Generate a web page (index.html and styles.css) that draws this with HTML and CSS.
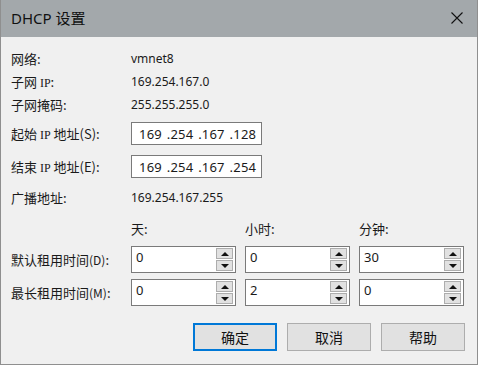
FILE: index.html
```html
<!DOCTYPE html>
<html lang="zh-CN">
<head>
  <meta charset="UTF-8">
  <title>DHCP 设置</title>
  <link rel="stylesheet" href="styles.css">
</head>
<body>
  <div class="dialog">
    <div class="titlebar">
      <span class="title">DHCP 设置</span>
      <span class="close">
        <svg width="12" height="12" viewBox="0 0 12 12"><path d="M0.5 0.5 L11.5 11.5 M11.5 0.5 L0.5 11.5" stroke="#111" stroke-width="1.1" fill="none"/></svg>
      </span>
    </div>
    <div class="content">
      <div class="row info">
        <span class="label">网络:</span>
        <span class="value">vmnet8</span>
      </div>
      <div class="row info">
        <span class="label">子网 <i>IP</i>:</span>
        <span class="value">169.254.167.0</span>
      </div>
      <div class="row info">
        <span class="label">子网掩码:</span>
        <span class="value">255.255.255.0</span>
      </div>
      <div class="row ip-row first">
        <span class="label">起始 <i>IP</i> 地址(S):</span>
        <div class="ip-box"><span>169</span>.<span>254</span>.<span>167</span>.<span>128</span></div>
      </div>
      <div class="row ip-row">
        <span class="label">结束 <i>IP</i> 地址(E):</span>
        <div class="ip-box"><span>169</span>.<span>254</span>.<span>167</span>.<span>254</span></div>
      </div>
      <div class="row info bcast">
        <span class="label">广播地址:</span>
        <span class="value">169.254.167.255</span>
      </div>

      <div class="lease">
        <span></span>
        <span class="head">天:</span>
        <span class="head">小时:</span>
        <span class="head">分钟:</span>

        <span class="label">默认租用时间<small>(D)</small>:</span>
        <div class="spin"><span class="num">0</span><span class="btns"><b class="up"></b><b class="down"></b></span></div>
        <div class="spin"><span class="num">0</span><span class="btns"><b class="up"></b><b class="down"></b></span></div>
        <div class="spin"><span class="num">30</span><span class="btns"><b class="up"></b><b class="down"></b></span></div>

        <span class="label">最长租用时间<small>(M)</small>:</span>
        <div class="spin"><span class="num">0</span><span class="btns"><b class="up"></b><b class="down"></b></span></div>
        <div class="spin"><span class="num">2</span><span class="btns"><b class="up"></b><b class="down"></b></span></div>
        <div class="spin"><span class="num">0</span><span class="btns"><b class="up"></b><b class="down"></b></span></div>
      </div>

      <div class="buttons">
        <button class="default">确定</button>
        <button>取消</button>
        <button>帮助</button>
      </div>
    </div>
  </div>
</body>
</html>
```

FILE: styles.css
```css
* {
  margin: 0;
  padding: 0;
  box-sizing: border-box;
}
body {
  width: 478px;
  height: 365px;
  font-family: "Noto Sans", "Noto Sans CJK SC", sans-serif;
  background: #f0f0f0;
  color: #1a1a1a;
}
.dialog {
  width: 478px;
  height: 365px;
  display: flex;
  flex-direction: column;
  border: 1px solid #8f8f8f;
  border-top: none;
  background: #f0f0f0;
}
.titlebar {
  height: 37px;
  background: #a3a8ab;
  display: flex;
  align-items: center;
  justify-content: space-between;
  padding: 0 14px 2px 10px;
}
.title {
  font-size: 15px;
  color: #111;
  font-family: "Noto Sans", "Noto Sans CJK SC", sans-serif;
}
.close {
  display: flex;
  margin-top: 1px;
}
.content {
  padding: 10px 12px 0 10px;
}
.row {
  display: flex;
  align-items: center;
}
.label {
  width: 120px;
  font-size: 13px;
  font-family: "Noto Sans CJK SC", sans-serif;
  color: #1a1a1a;
  white-space: nowrap;
}
.label i {
  font-style: normal;
  font-family: "Liberation Serif", serif;
  font-size: 12px;
}
.label small {
  font-size: 12px;
}
.value {
  font-size: 12px;
  font-family: "Noto Sans", sans-serif;
}
.info {
  height: 23px;
}
.ip-row {
  height: 23px;
  margin-bottom: 10px;
}
.ip-row.first {
  margin-top: 6px;
}
.bcast {
  margin-top: -2px;
}
.ip-box {
  width: 131px;
  height: 23px;
  background: #fff;
  border: 1px solid #7a7a7a;
  display: flex;
  align-items: center;
  padding-left: 7px;
  font-size: 13px;
  font-family: "Noto Sans", sans-serif;
  letter-spacing: 0.2px;
}
.ip-box span {
  width: 25px;
  text-align: left;
  margin-right: 3px;
}
.lease {
  margin-top: 8px;
  display: grid;
  grid-template-columns: 120px 114px 114px 105px;
  grid-template-rows: 23px 27px 27px;
  row-gap: 6px;
  align-items: center;
}
.lease .head {
  font-size: 13px;
  font-family: "Noto Sans CJK SC", sans-serif;
}
.spin {
  width: 105px;
  height: 27px;
  background: #fff;
  border: 1px solid #7a7a7a;
  display: flex;
  justify-content: space-between;
  padding: 1px 2px 1px 4px;
}
.spin .num {
  font-size: 13px;
  line-height: 18px;
  font-family: "Noto Sans", sans-serif;
}
.btns {
  width: 17px;
  display: flex;
  flex-direction: column;
  gap: 1px;
}
.btns b {
  flex: 1;
  background: #e1e1e1;
  border: 1px solid #adadad;
  display: flex;
  align-items: center;
  justify-content: center;
}
.btns .up::after {
  content: "";
  border-left: 4px solid transparent;
  border-right: 4px solid transparent;
  border-bottom: 4px solid #111;
}
.btns .down::after {
  content: "";
  border-left: 4px solid transparent;
  border-right: 4px solid transparent;
  border-top: 4px solid #111;
}
.buttons {
  display: flex;
  justify-content: flex-end;
  gap: 10px;
  margin-top: 17px;
}
.buttons button {
  width: 84px;
  height: 28px;
  background: #e1e1e1;
  border: 1px solid #adadad;
  font-size: 14px;
  font-family: "Noto Sans CJK SC", sans-serif;
  color: #111;
}
.buttons .default {
  border: 2px solid #0078d7;
}
```
